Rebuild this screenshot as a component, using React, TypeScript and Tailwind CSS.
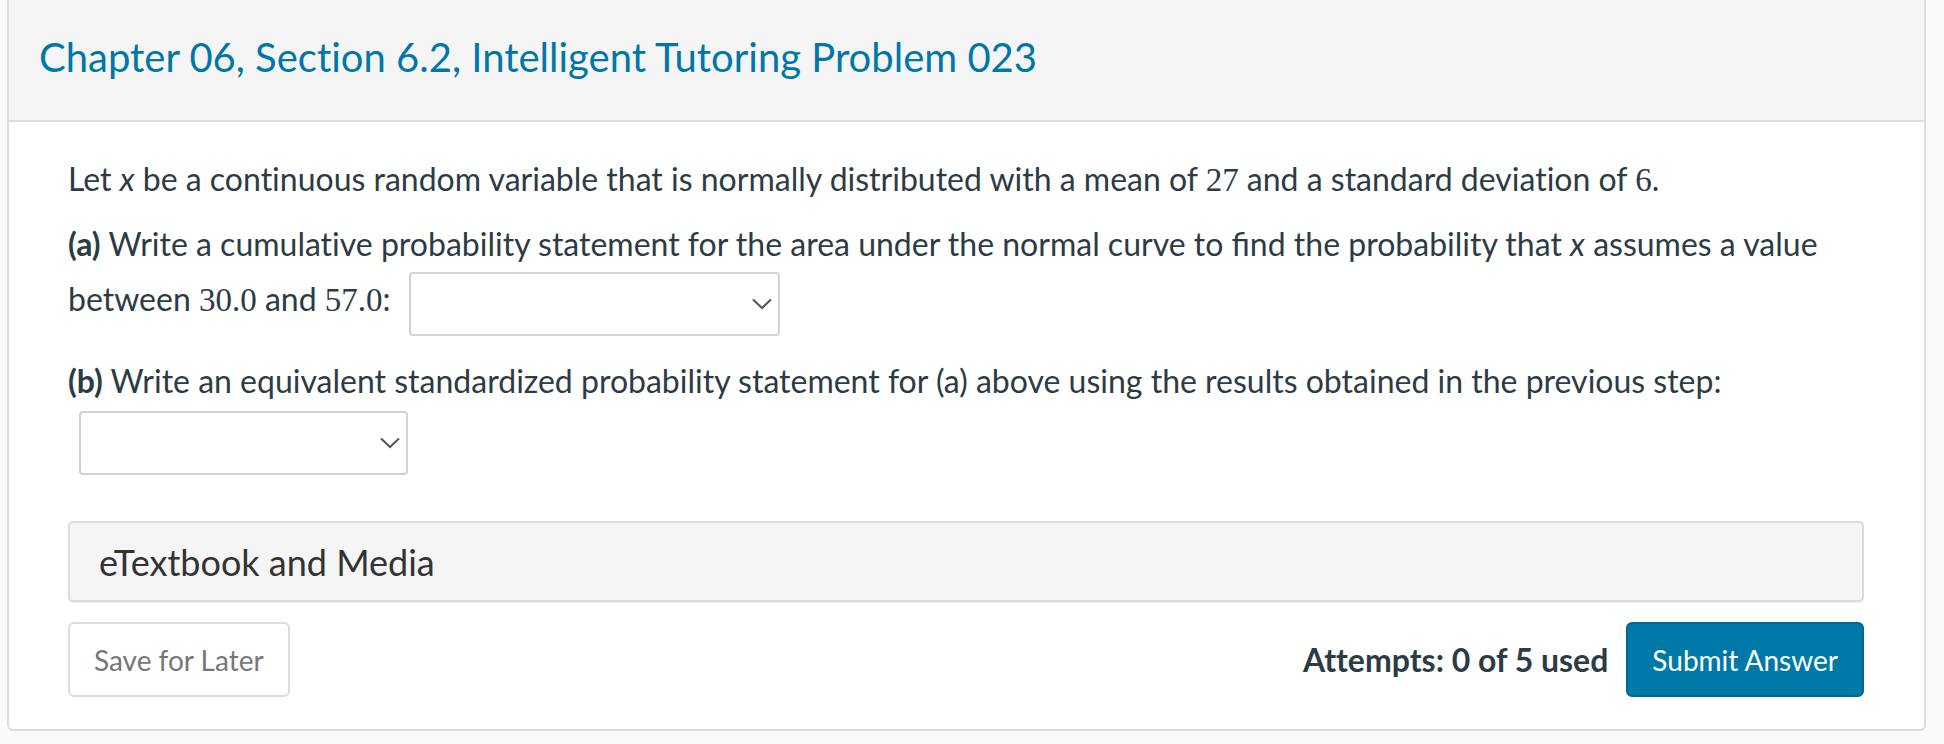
import React from "react"

function Num({ children }: { children: React.ReactNode }) {
  return <span className="font-['Liberation_Serif',serif] text-[33px]">{children}</span>
}

function Select({ width }: { width: string }) {
  return (
    <div
      className={`flex h-[64px] items-center justify-end rounded-[4px] border-2 border-[#cfd3d6] bg-white pr-[6px] ${width}`}
    >
      <svg width="20" height="12" viewBox="0 0 20 12" fill="none">
        <polyline points="1,1.5 10,10 19,1.5" stroke="#555" strokeWidth="2" />
      </svg>
    </div>
  )
}

export default function App() {
  return (
    <div className="h-[744px] w-[1944px] bg-[#fafafa] pl-[7px] font-['Lato',sans-serif] text-[#2d3b45] [font-variant-ligatures:none]">
      <div className="w-[1919px] rounded-b-[6px] border-2 border-t-0 border-[#dcdcdc] bg-white">
        <div className="h-[122px] border-b-2 border-[#dcdcdc] bg-[#f5f5f5] px-[30px] pt-[37px]">
          <h1 className="text-[40px] leading-none text-[#0077a8]">
            Chapter 06, Section 6.2, Intelligent Tutoring Problem 023
          </h1>
        </div>

        <div className="pb-[32px] pl-[59px] pr-[60px] pt-[37px] text-[32px]">
          <p className="leading-[40px]">
            Let <i>x</i> be a continuous random variable that is normally distributed with a mean of{" "}
            <Num>27</Num> and a standard deviation of <Num>6</Num>.
          </p>

          <p className="mt-[24px] leading-[40px]">
            <b>(a)</b> Write a cumulative probability statement for the area under the normal curve to{" "}
            <span className="[font-variant-ligatures:common-ligatures]">find</span> the probability that{" "}
            <i>x</i> assumes a value
          </p>
          <div className="mt-[8px] flex items-start gap-[18px]">
            <span className="mt-[7px] leading-[40px]">
              between <Num>30.0</Num> and <Num>57.0</Num>:
            </span>
            <Select width="w-[371px]" />
          </div>

          <p className="mt-[25px] leading-[40px]">
            <b>(b)</b> Write an equivalent standardized probability statement for (a) above using the results
            obtained in the previous step:
          </p>
          <div className="mt-[10px] pl-[11px]">
            <Select width="w-[329px]" />
          </div>

          <div className="mt-[46px] flex h-[81px] items-center rounded-[5px] border-2 border-[#dcdcdc] bg-[#f5f5f5] px-[29px] shadow-[0_1px_1px_rgba(0,0,0,0.08)]">
            <h2 className="text-[36px] text-[#333]">eTextbook and Media</h2>
          </div>

          <div className="mt-[20px] flex items-center justify-between">
            <button className="h-[75px] rounded-[6px] border-2 border-[#dcdcdc] bg-white px-[24px] text-[28px] text-[#777]">
              Save for Later
            </button>
            <div className="flex items-center gap-[18px]">
              <span className="text-[32px] font-bold">Attempts: 0 of 5 used</span>
              <button className="h-[75px] rounded-[6px] border-2 border-[#006890] bg-[#0079a9] px-[24px] text-[28px] text-white">
                Submit Answer
              </button>
            </div>
          </div>
        </div>
      </div>
    </div>
  )
}
